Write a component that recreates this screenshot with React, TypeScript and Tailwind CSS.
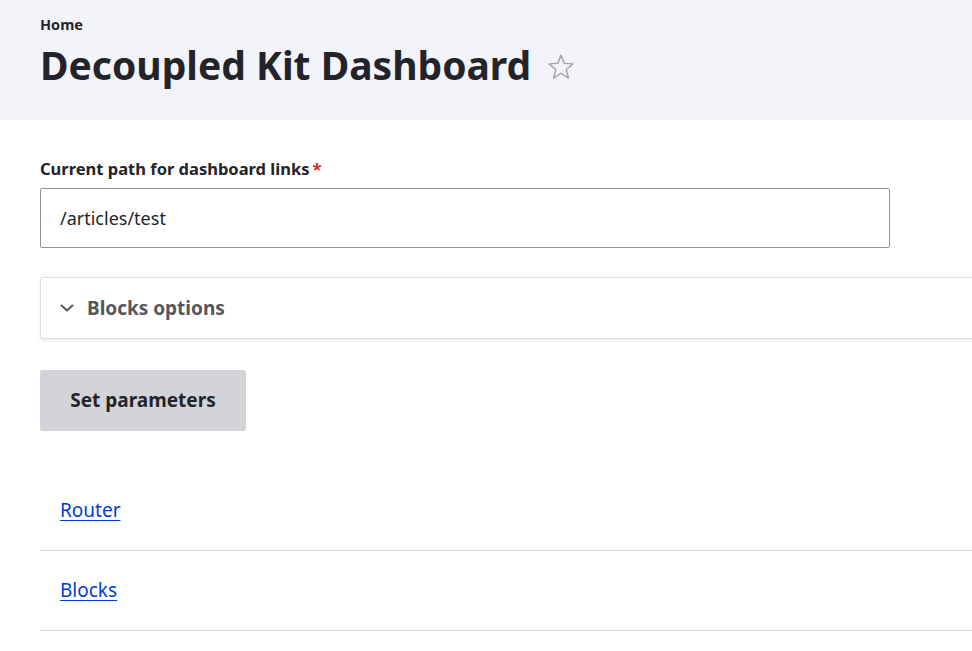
import React from 'react';

const font = { fontFamily: '"Noto Sans", Lato, "DejaVu Sans", sans-serif' };

const links = ['Router', 'Blocks'];

export default function App() {
  return (
    <div className="min-h-screen overflow-hidden bg-white text-[#232429]" style={font}>
      <header className="h-[120px] bg-[#f3f4f9] px-[40px] pt-[14px]">
        <div className="text-[14.5px] font-bold leading-[20px]">Home</div>
        <div className="mt-[6px] flex items-center">
          <h1 className="text-[39px] font-bold leading-[50px]">Decoupled Kit Dashboard</h1>
          <svg className="ml-[15px] mt-[4px]" width="30" height="30" viewBox="0 0 24 24" fill="none" stroke="#a1a3aa" strokeWidth="1.1" strokeLinejoin="round">
            <path d="M12 2.5l2.6 6.6 7 .4-5.4 4.5 1.8 6.9L12 17l-6 3.9 1.8-6.9L2.4 9.5l7-.4z" />
          </svg>
        </div>
      </header>

      <main className="-mr-[10px] pl-[40px] pt-[38px]">
        <label className="block text-[16.5px] font-bold leading-[22px]">
          Current path for dashboard links
          <span className="ml-[3px] text-[#dc2323]">*</span>
        </label>
        <input
          className="mt-[8px] block h-[60px] w-[850px] rounded-[2px] border border-[#8e929c] px-[19px] text-[18px] text-[#232429] outline-none"
          style={font}
          defaultValue="/articles/test"
        />

        <div className="mt-[29px] flex h-[62px] items-center rounded-[2px] border border-[#dedfe4] bg-white pl-[18px] shadow-[0_2px_4px_rgba(0,0,0,0.08)]">
          <svg width="16" height="16" viewBox="0 0 16 16" fill="none" stroke="#55565b" strokeWidth="2" strokeLinecap="round">
            <path d="M2.5 5.5l5.5 5 5.5-5" />
          </svg>
          <span className="ml-[12px] text-[19px] font-bold text-[#55565b]">Blocks options</span>
        </div>

        <button className="mt-[31px] h-[61px] w-[206px] rounded-[2px] bg-[#d3d4d9] text-[19px] font-bold text-[#232429]" style={font}>
          Set parameters
        </button>

        <ul className="mt-[40px]">
          {links.map((l) => (
            <li key={l} className="flex h-[80px] items-center border-b border-[#d3d4d9] pl-[20px]">
              <a href="#" className="text-[19px] text-[#003ecc] underline underline-offset-[3px]">
                {l}
              </a>
            </li>
          ))}
        </ul>
      </main>
    </div>
  );
}
